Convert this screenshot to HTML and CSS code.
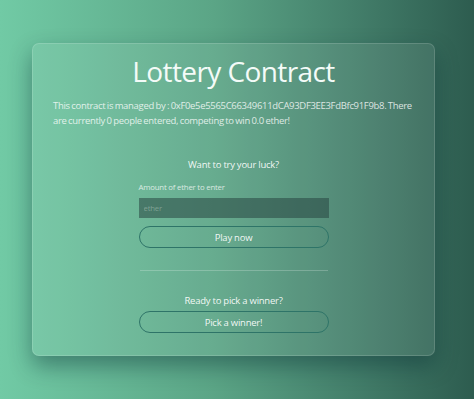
FILE: index.html
```html
<!DOCTYPE html>
<html>
<head>
<meta charset="utf-8">
<link rel="stylesheet" href="styles.css">
</head>
<body>
<div class="card">
  <h1 class="title">Lottery Contract</h1>
  <p class="info">This contract is managed by : 0xF0e5e5565C66349611dCA93DF3EE3FdBfc91F9b8. There are currently 0 people entered, competing to win 0.0 ether!</p>
  <form class="section">
    <h4 class="question">Want to try your luck?</h4>
    <label class="label">Amount of ether to enter</label>
    <input class="input" placeholder="ether">
    <button type="button" class="btn">Play now</button>
  </form>
  <hr class="rule">
  <div class="section">
    <h4 class="question">Ready to pick a winner?</h4>
    <button type="button" class="btn">Pick a winner!</button>
  </div>
</div>
</body>
</html>
```
FILE: styles.css
```css
* { box-sizing: border-box; }
html, body { margin: 0; height: 100%; }
body {
  font-family: "Open Sans", "DejaVu Sans", sans-serif;
  background: linear-gradient(90deg, #71caa5 0%, #5ba586 45%, #437e6a 75%, #2d5c4f 100%);
  padding: 43px 0 0 32px;
  overflow: hidden;
}
.card {
  width: 403px;
  height: 313px;
  border-radius: 7px;
  background: rgba(255,255,255,0.08);
  border: 1px solid rgba(255,255,255,0.14);
  box-shadow: 0 10px 22px rgba(10,50,55,0.45);
  padding: 8px 20px 0 20px;
  color: #fff;
}
.title {
  margin: 0;
  font-weight: 400;
  font-size: 28px;
  letter-spacing: -0.6px;
  line-height: 38px;
  text-align: center;
  color: #f4fbf8;
}
.info {
  margin: 8px -2px 0 0;
  font-size: 9.5px;
  letter-spacing: -0.32px;
  word-spacing: -0.6px;
  line-height: 15px;
  color: rgba(255,255,255,0.8);
}
.section {
  width: 190px;
  margin: 0 auto;
  display: flex;
  flex-direction: column;
}
form.section { margin-top: 30px; }
.question {
  margin: 0;
  font-weight: 400;
  font-size: 9.5px;
  letter-spacing: -0.25px;
  line-height: 14px;
  text-align: center;
  color: rgba(255,255,255,0.92);
}
.label {
  margin-top: 9px;
  font-size: 7.8px;
  letter-spacing: -0.2px;
  line-height: 12px;
  color: rgba(255,255,255,0.75);
}
.input {
  margin-top: 5px;
  height: 20px;
  border: none;
  background: rgba(40,70,65,0.55);
  font-family: inherit;
  font-size: 7.8px;
  letter-spacing: -0.2px;
  padding: 0 5px;
  color: #fff;
  outline: none;
}
.input::placeholder { color: rgba(255,255,255,0.3); }
.btn {
  margin-top: 8px;
  height: 22px;
  border-radius: 12px;
  border: 1px solid #2e7468;
  background: transparent;
  color: rgba(255,255,255,0.92);
  font-family: inherit;
  font-size: 9.5px;
  letter-spacing: -0.25px;
  padding: 0;
}
.rule {
  width: 188px;
  margin: 22px auto 23px auto;
  border: none;
  height: 1px;
  background: rgba(255,255,255,0.22);
}
.section .question + .btn { margin-top: 3px; }
```
